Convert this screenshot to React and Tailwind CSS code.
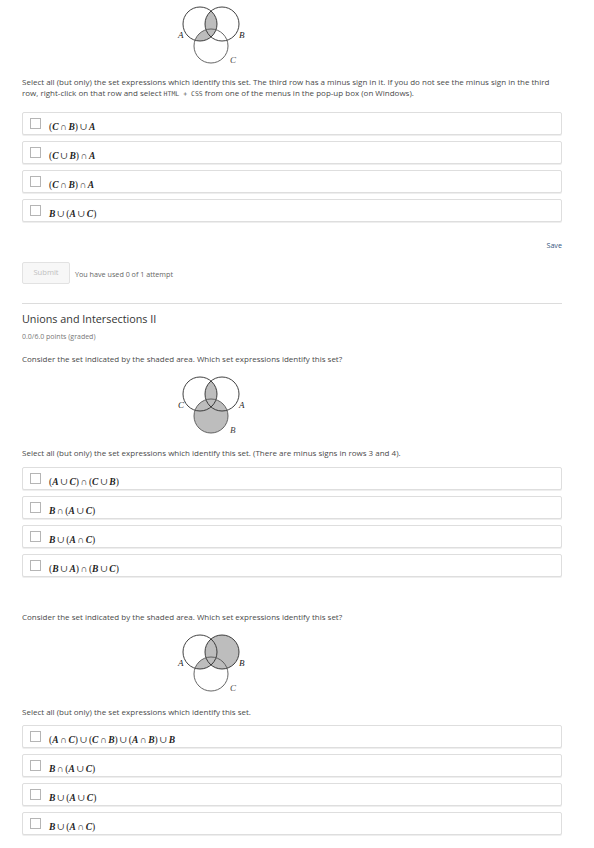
import React from 'react';

const font = { fontFamily: '"Open Sans", "Liberation Sans", sans-serif' };

// circle geometry shared by every diagram
const LEFT = { cx: 30, cy: 24 };
const RIGHT = { cx: 52, cy: 24 };
const BOTTOM = { cx: 41, cy: 46 };
const R = 17;

const Venn = ({ id, labels, shade }) => {
  // shade: list of regions, each a circle optionally clipped by a second one
  const circles = { left: LEFT, right: RIGHT, bottom: BOTTOM };
  return (
    <svg width="80" height="70" viewBox="0 0 80 70" className="block ml-[148px]">
      <defs>
        {Object.entries(circles).map(([key, c]) => (
          <clipPath key={key} id={`${id}-${key}`}>
            <circle cx={c.cx} cy={c.cy} r={R} />
          </clipPath>
        ))}
      </defs>
      {shade.map((region, i) => {
        const [first, second] = region;
        const c = circles[first];
        const shape = <circle cx={c.cx} cy={c.cy} r={R} fill="#bdbdbd" />;
        return second ? (
          <g key={i} clipPath={`url(#${id}-${second})`}>
            {shape}
          </g>
        ) : (
          <g key={i}>{shape}</g>
        );
      })}
      <circle cx={LEFT.cx} cy={LEFT.cy} r={R} fill="none" stroke="#2b2b2b" strokeWidth="0.9" />
      <circle cx={RIGHT.cx} cy={RIGHT.cy} r={R} fill="none" stroke="#2b2b2b" strokeWidth="0.9" />
      <circle cx={BOTTOM.cx} cy={BOTTOM.cy} r={R} fill="none" stroke="#555" strokeWidth="0.9" />
      <text x="8" y="38" fontSize="9" fontStyle="italic" fontFamily="Liberation Serif, serif" fill="#222">
        {labels[0]}
      </text>
      <text x="69" y="38" fontSize="9" fontStyle="italic" fontFamily="Liberation Serif, serif" fill="#222">
        {labels[1]}
      </text>
      <text x="60" y="63" fontSize="9" fontStyle="italic" fontFamily="Liberation Serif, serif" fill="#444">
        {labels[2]}
      </text>
    </svg>
  );
};

const MathExpr = ({ expr }) => (
  <span className="text-[9.5px] text-[#222] leading-none" style={{ fontFamily: '"Liberation Serif", "DejaVu Serif", serif' }}>
    {expr.split('').map((ch, i) => {
      if (/[A-Z]/.test(ch)) {
        return (
          <span key={i} className="italic font-bold">
            {ch}
          </span>
        );
      }
      if (ch === '∪' || ch === '∩') {
        return (
          <span key={i} className="mx-[1.5px] text-[#333]">
            {ch}
          </span>
        );
      }
      return <span key={i}>{ch}</span>;
    })}
  </span>
);

const Choice = ({ expr }) => (
  <div className="flex h-[23px] items-center rounded-[2px] border border-[#dedede] bg-white pl-[7px] shadow-[0_1px_0_#eee]">
    <span className="h-[11px] w-[11px] shrink-0 border border-[#b5b5b5] bg-white" />
    <span className="ml-[8px]">
      <MathExpr expr={expr} />
    </span>
  </div>
);

const ChoiceList = ({ items, className }) => (
  <div className={`flex flex-col gap-[6px] ${className}`}>
    {items.map((expr) => (
      <Choice key={expr} expr={expr} />
    ))}
  </div>
);

const Body = ({ children, className = '' }) => (
  <p className={`text-[8px] leading-[11px] text-[#4a4a4a] ${className}`}>{children}</p>
);

export default function App() {
  return (
    <div className="min-h-[848px] w-[594px] bg-white" style={font}>
      <div className="ml-[22px] w-[540px]">
        <Venn id="v1" labels={['A', 'B', 'C']} shade={[['left', 'right'], ['left', 'bottom']]} />

        <Body className="mt-[6px]">
          Select all (but only) the set expressions which identify this set. The third row has a minus sign in it. If you
          do not see the minus sign in the third row, right-click on that row and select{' '}
          <code className="text-[6.5px] leading-none text-[#555]" style={{ fontFamily: '"DejaVu Sans Mono", monospace' }}>
            HTML + CSS
          </code>{' '}
          from one of the menus in the pop-up box (on Windows).
        </Body>

        <ChoiceList className="mt-[14px]" items={['(C∩B)∪A', '(C∪B)∩A', '(C∩B)∩A', 'B∪(A∪C)']} />

        <div className="mt-[18px] flex justify-end">
          <span className="text-[7.2px] leading-[10px] text-[#35577f]">Save</span>
        </div>

        <div className="mt-[12px] flex items-center">
          <div className="flex h-[22px] w-[48px] items-center justify-center rounded-[2px] border border-[#e2e2e2] bg-[#f7f7f7] text-[7.6px] text-[#c0c0c0]">
            Submit
          </div>
          <span className="ml-[5px] mt-[3px] text-[7.2px] text-[#666]">You have used 0 of 1 attempt</span>
        </div>

        <div className="mt-[19px] h-px bg-[#dcdcdc]" />

        <h2 className="mt-[8px] text-[10.8px] leading-[14px] text-[#333]">Unions and Intersections II</h2>
        <p className="mt-[7px] text-[7px] leading-[8px] text-[#777]">0.0/6.0 points (graded)</p>

        <Body className="mt-[12px]">
          Consider the set indicated by the shaded area. Which set expressions identify this set?
        </Body>
        <div className="mt-[6px]">
          <Venn id="v2" labels={['C', 'A', 'B']} shade={[['left', 'right'], ['bottom']]} />
        </div>
        <Body className="mt-[7px]">
          Select all (but only) the set expressions which identify this set. (There are minus signs in rows 3 and 4).
        </Body>
        <ChoiceList className="mt-[9px]" items={['(A∪C)∩(C∪B)', 'B∩(A∪C)', 'B∪(A∩C)', '(B∪A)∩(B∪C)']} />

        <Body className="mt-[34px]">
          Consider the set indicated by the shaded area. Which set expressions identify this set?
        </Body>
        <div className="mt-[6px]">
          <Venn id="v3" labels={['A', 'B', 'C']} shade={[['right'], ['left', 'bottom']]} />
        </div>
        <Body className="mt-[8px]">Select all (but only) the set expressions which identify this set.</Body>
        <ChoiceList className="mt-[8px]" items={['(A∩C)∪(C∩B)∪(A∩B)∪B', 'B∩(A∪C)', 'B∪(A∪C)', 'B∪(A∩C)']} />
      </div>
    </div>
  );
}
